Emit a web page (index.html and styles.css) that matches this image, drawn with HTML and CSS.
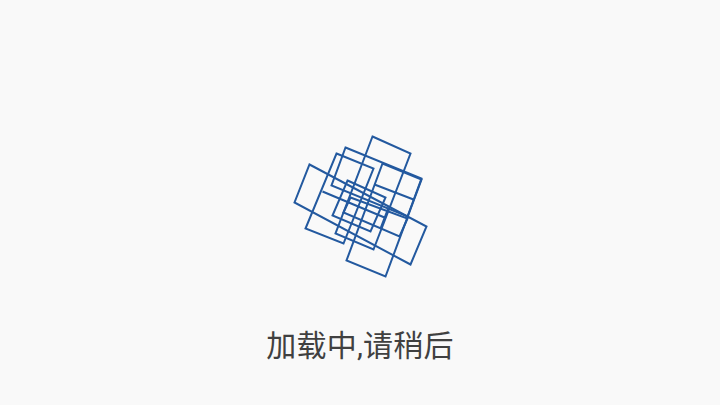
FILE: index.html
```html
<!DOCTYPE html>
<html lang="zh-CN">
<head>
<meta charset="utf-8">
<title>加载中,请稍后</title>
<link rel="stylesheet" href="styles.css">
</head>
<body>
<main class="loader">
  <svg class="spinner" viewBox="289.5 129.5 140 150" aria-hidden="true">
    <polygon points="372,136 410,153 373,249 335,233"/>
    <polygon points="345,147 421,178 407,216 331,185"/>
    <polygon points="336,153 373,168 343,243 305,228"/>
    <polygon points="309,164 426,226 410,264 294,202"/>
    <polygon points="382,163 421,179 385,276 346,260"/>
    <polygon points="350,197 407,218 399,236 343,212"/>
    <polygon points="347,180 385,197 370,231 332,215"/>
    <path d="M374,184L413,199M322,191L384,217M388,207L380,228"/>
  </svg>
  <p class="message">加载中,请稍后</p>
</main>
</body>
</html>
```

FILE: styles.css
```css
html, body {
  margin: 0;
  height: 100%;
  background: #f9f9f9;
}

.loader {
  display: flex;
  flex-direction: column;
  align-items: center;
  padding-top: 130px;
  box-sizing: border-box;
  height: 100%;
  overflow: hidden;
}

.spinner {
  display: block;
  width: 140px;
  height: 150px;
  flex: none;
}

.spinner polygon,
.spinner path {
  fill: none;
  stroke: #23599f;
  stroke-width: 2;
}

.message {
  margin: 44px 0 0;
  font: 400 30px/44px Roboto, "Noto Sans CJK SC", sans-serif;
  letter-spacing: 0.2px;
  color: #404040;
  white-space: nowrap;
}
```
